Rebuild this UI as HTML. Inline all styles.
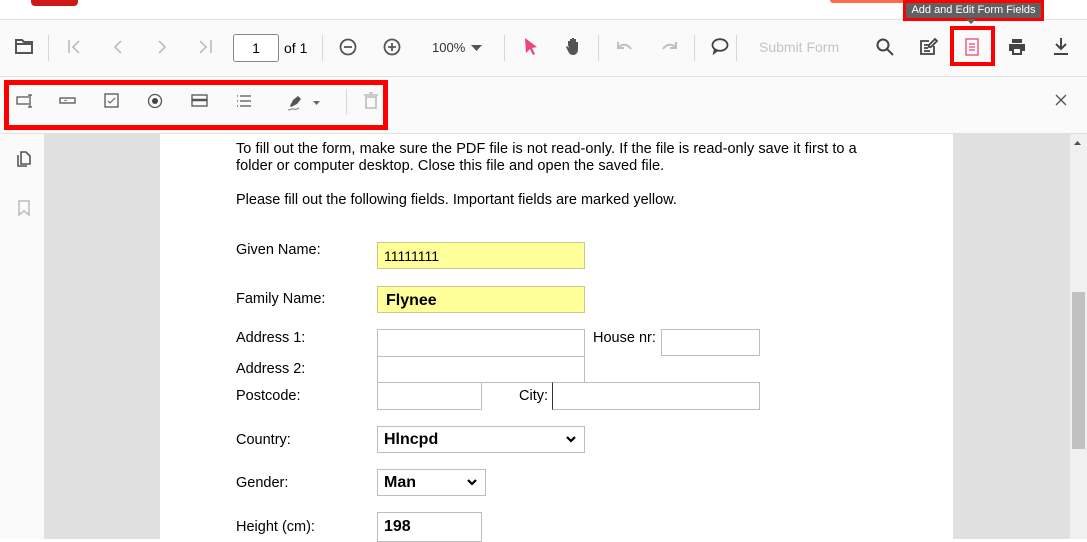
<!DOCTYPE html>
<html><head><meta charset="utf-8"><style>
*{margin:0;padding:0;box-sizing:border-box}
body{width:1087px;height:539px;overflow:hidden;position:relative;background:#fff;font-family:"Liberation Sans",Arial,sans-serif}
.a{position:absolute}
.sep{position:absolute;width:1px;background:#d8d8d8}
svg{position:absolute;overflow:visible}
.t{position:absolute;font-size:14.5px;color:#000;white-space:nowrap}
.f{position:absolute;border:1px solid #bdbdbd;background:#fff;font-size:14px;padding-left:6px;line-height:24px}
.y{background:#ffff99;border-color:#c8c890}
.b{font-weight:bold;font-size:16px}
</style></head><body>
<div class="a" style="left:31px;top:0;width:47px;height:6px;background:#d01818;border-radius:0 0 4px 4px"></div>
<div class="a" style="left:830px;top:0;width:75px;height:3px;background:#ff6a4a;border-radius:0 0 6px 6px"></div>
<div class="a" style="left:0;top:19px;width:1087px;height:1px;background:#e0e0e0"></div>
<div class="a" style="left:0;top:20px;width:1087px;height:56px;background:#fafafa"></div>
<div class="a" style="left:0;top:76px;width:1087px;height:1px;background:#e0e0e0"></div>
<svg style="left:15px;top:38px" width="18" height="16"><path d="M1 2h6l2 2h8v11H1z" fill="none" stroke="#555" stroke-width="2"/><path d="M1 6h16" stroke="#555" stroke-width="2"/></svg>
<div class="sep" style="left:48px;top:35px;height:26px"></div>
<svg style="left:68px;top:40px" width="14" height="14" stroke="#b8b8b8" stroke-width="1.5" fill="none"><path d="M1 0v13M11 1l-6 6 6 6"/></svg>
<svg style="left:113px;top:40px" width="10" height="14" stroke="#b8b8b8" stroke-width="1.5" fill="none"><path d="M8 1l-6 6 6 6"/></svg>
<svg style="left:157px;top:40px" width="10" height="14" stroke="#b8b8b8" stroke-width="1.5" fill="none"><path d="M2 1l6 6-6 6"/></svg>
<svg style="left:199px;top:40px" width="14" height="14" stroke="#b8b8b8" stroke-width="1.5" fill="none"><path d="M1 1l6 6-6 6M12 0v13"/></svg>
<div class="a" style="left:233px;top:34px;width:46px;height:28px;border:1px solid #888;border-radius:3px;background:#fff;font-size:14px;text-align:center;line-height:26px">1</div>
<div class="t" style="left:284px;top:40px;font-size:14px">of 1</div>
<div class="sep" style="left:322px;top:35px;height:26px"></div>
<svg style="left:339px;top:38px" width="18" height="18" stroke="#555" stroke-width="1.8" fill="none"><circle cx="9" cy="9" r="7.5"/><path d="M5 9h8"/></svg>
<svg style="left:383px;top:38px" width="18" height="18" stroke="#555" stroke-width="1.8" fill="none"><circle cx="9" cy="9" r="7.5"/><path d="M5 9h8M9 5v8"/></svg>
<div class="t" style="left:432px;top:40px;color:#333;font-size:13px">100%</div>
<svg style="left:471px;top:45px" width="12" height="7"><path d="M0 0h11l-5.5 6z" fill="#555"/></svg>
<div class="sep" style="left:504px;top:35px;height:26px"></div>
<svg style="left:524px;top:37px" width="14" height="20"><path d="M1 1l12 9-5 1 3 6-2 1-3-6-4 4z" fill="#e8467c"/></svg>
<svg style="left:565px;top:37px" width="18" height="19"><path d="M3 8V4h2v5V2h2v7V1h2v8V2h2v8V5h2v7c0 4-2 6-5 6H8c-3 0-4-2-5-4L1 10l1-1 2 2z" fill="#555"/></svg>
<div class="sep" style="left:598px;top:35px;height:26px"></div>
<svg style="left:616px;top:41px" width="18" height="12" stroke="#c0c0c0" stroke-width="2" fill="none"><path d="M2 1v6h6M2 7c3-4 9-5 13 1"/></svg>
<svg style="left:660px;top:41px" width="18" height="12" stroke="#c0c0c0" stroke-width="2" fill="none"><path d="M16 1v6h-6M16 7c-3-4-9-5-13 1"/></svg>
<div class="sep" style="left:694px;top:35px;height:26px"></div>
<svg style="left:711px;top:38px" width="18" height="17" stroke="#444" stroke-width="1.8" fill="none"><ellipse cx="9" cy="7" rx="7.5" ry="5.8"/><path d="M4 11l-1 4 4-3"/></svg>
<div class="sep" style="left:736px;top:35px;height:26px"></div>
<div class="t" style="left:759px;top:39px;color:#c4c4c4;font-size:14px">Submit Form</div>
<svg style="left:876px;top:38px" width="18" height="18" stroke="#444" stroke-width="2" fill="none"><circle cx="7" cy="7" r="5.5"/><path d="M11 11l6 6"/></svg>
<svg style="left:920px;top:38px" width="18" height="18" stroke="#444" stroke-width="1.8" fill="none"><path d="M14 8v8H1V3h8M4 7h5M4 10h4M4 13h6M15 1l2 2-6 6H9V7z"/></svg>
<div class="a" style="left:950px;top:26px;width:45px;height:40px;border:4px solid #f00"></div>
<svg style="left:965px;top:38px" width="14" height="18" stroke="#e8467c" stroke-width="1.3" fill="none"><rect x="1" y="1" width="12" height="16"/><path d="M4 6h6M4 9h6M4 12h6"/></svg>
<svg style="left:1008px;top:39px" width="18" height="16"><path d="M4 0h10v4H4zM1 5h16v7h-3v4H4v-4H1z" fill="#444"/><rect x="6" y="10" width="6" height="4" fill="#fafafa"/></svg>
<svg style="left:1054px;top:38px" width="14" height="17" stroke="#444" stroke-width="2" fill="none"><path d="M7 0v10M2 6l5 5 5-5M0 16h14"/></svg>
<div class="a" style="left:903px;top:0;width:141px;height:21px;border:3px solid #f00;background:#616161;color:#fff;font-size:11px;text-align:center;line-height:15px">Add and Edit Form Fields</div>
<svg style="left:966px;top:19px" width="10" height="6"><path d="M0 0h10L5 5z" fill="#616161"/></svg>
<div class="a" style="left:0;top:77px;width:1087px;height:56px;background:#fafafa"></div>
<div class="a" style="left:0;top:133px;width:1087px;height:1px;background:#e0e0e0"></div>
<div class="a" style="left:4px;top:80px;width:384px;height:50px;border:5px solid #f00"></div>
<svg style="left:16px;top:94px" width="18" height="14" stroke="#555" stroke-width="1.3" fill="none"><path d="M13 3H1v7h12M12 1h4M14 1v12M12 13h4"/></svg>
<svg style="left:59px;top:97px" width="18" height="8" stroke="#555" stroke-width="1.3" fill="none"><rect x="1" y="1" width="15" height="5"/><path d="M5 3.5h3" stroke="#999"/></svg>
<svg style="left:104px;top:93px" width="16" height="16" stroke="#555" stroke-width="1.3" fill="none"><rect x="1" y="1" width="13" height="13"/><path d="M4 8l2 2 5-5" stroke="#777"/></svg>
<svg style="left:147px;top:93px" width="16" height="16"><circle cx="8" cy="8" r="6.5" stroke="#555" stroke-width="1.3" fill="none"/><circle cx="8" cy="8" r="3" fill="#444"/></svg>
<svg style="left:191px;top:94px" width="18" height="14" stroke="#555" stroke-width="1.3" fill="none"><rect x="1" y="1" width="15" height="11"/><path d="M1 6h15" stroke-width="2.5"/></svg>
<svg style="left:236px;top:95px" width="16" height="12" stroke="#555" stroke-width="1.3" fill="none"><path d="M1 1h1M1 6h1M1 11h1M4 1h11M4 6h11M4 11h11"/></svg>
<svg style="left:287px;top:95px" width="18" height="16"><path d="M3 11l3-6 5-4 3 3-4 5-6 3z" fill="#555"/><path d="M1 15c3 0 4-2 6-1s3 0 5-1" stroke="#777" fill="none"/></svg>
<svg style="left:313px;top:101px" width="8" height="5"><path d="M0 0h7L3.5 4z" fill="#666"/></svg>
<div class="sep" style="left:346px;top:89px;height:26px"></div>
<svg style="left:364px;top:93px" width="14" height="16" stroke="#bbb" stroke-width="1.6" fill="none"><path d="M0 2h14M5 0h4M2 4h10v11H2z"/></svg>
<svg style="left:1056px;top:95px" width="10" height="10" stroke="#555" stroke-width="1.4"><path d="M0 0l10 10M10 0L0 10"/></svg>
<div class="a" style="left:0;top:134px;width:44px;height:405px;background:#fafafa"></div>
<svg style="left:17px;top:151px" width="14" height="16" stroke="#555" stroke-width="1.6" fill="none"><path d="M4 1h5l4 4v8H4zM1 4v11h9"/></svg>
<svg style="left:18px;top:200px" width="12" height="16" stroke="#bbb" stroke-width="1.5" fill="none"><path d="M1 1h10v14l-5-4-5 4z"/></svg>
<div class="a" style="left:44px;top:134px;width:1026px;height:405px;background:#e0e0e0"></div>
<div class="a" style="left:160px;top:134px;width:793px;height:405px;background:#fff"></div>
<div class="a" style="left:1070px;top:134px;width:17px;height:405px;background:#f0f0f0"></div>
<svg style="left:1074px;top:141px" width="8" height="5"><path d="M0 4h7L3.5 0z" fill="#505050"/></svg>
<div class="a" style="left:1072px;top:292px;width:13px;height:157px;background:#c1c1c1"></div>
<div class="t" style="left:236px;top:141px;line-height:17px;letter-spacing:0.05px">To fill out the form, make sure the PDF file is not read-only. If the file is read-only save it first to a<br>folder or computer desktop. Close this file and open the saved file.</div>
<div class="t" style="left:236px;top:192px">Please fill out the following fields. Important fields are marked yellow.</div>
<div class="t" style="left:236px;top:242px">Given Name:</div>
<div class="f y" style="left:377px;top:242px;width:208px;height:27px;line-height:26px;font-size:14px">11111111</div>
<div class="t" style="left:236px;top:291px">Family Name:</div>
<div class="f y b" style="left:377px;top:286px;width:208px;height:27px;line-height:27px;padding-left:8px">Flynee</div>
<div class="t" style="left:236px;top:330px">Address 1:</div>
<div class="f" style="left:377px;top:329px;width:208px;height:28px"></div>
<div class="t" style="left:593px;top:330px">House nr:</div>
<div class="f" style="left:661px;top:329px;width:99px;height:27px"></div>
<div class="t" style="left:236px;top:361px">Address 2:</div>
<div class="f" style="left:377px;top:356px;width:208px;height:27px"></div>
<div class="t" style="left:236px;top:388px">Postcode:</div>
<div class="f" style="left:377px;top:382px;width:105px;height:28px"></div>
<div class="t" style="left:519px;top:388px">City:</div>
<div class="f" style="left:552px;top:382px;width:208px;height:28px;border-left-color:#333"></div>
<div class="t" style="left:236px;top:432px">Country:</div>
<div class="f b" style="left:377px;top:426px;width:208px;height:27px;line-height:26px">Hlncpd</div>
<svg style="left:566px;top:436px" width="10" height="7" stroke="#000" stroke-width="2.2" fill="none"><path d="M1 1l4 4 4-4"/></svg>
<div class="t" style="left:236px;top:475px">Gender:</div>
<div class="f b" style="left:377px;top:469px;width:109px;height:27px;line-height:26px">Man</div>
<svg style="left:467px;top:479px" width="10" height="7" stroke="#000" stroke-width="2.2" fill="none"><path d="M1 1l4 4 4-4"/></svg>
<div class="t" style="left:236px;top:519px">Height (cm):</div>
<div class="f b" style="left:377px;top:512px;width:105px;height:30px;line-height:27px">198</div>
</body></html>
